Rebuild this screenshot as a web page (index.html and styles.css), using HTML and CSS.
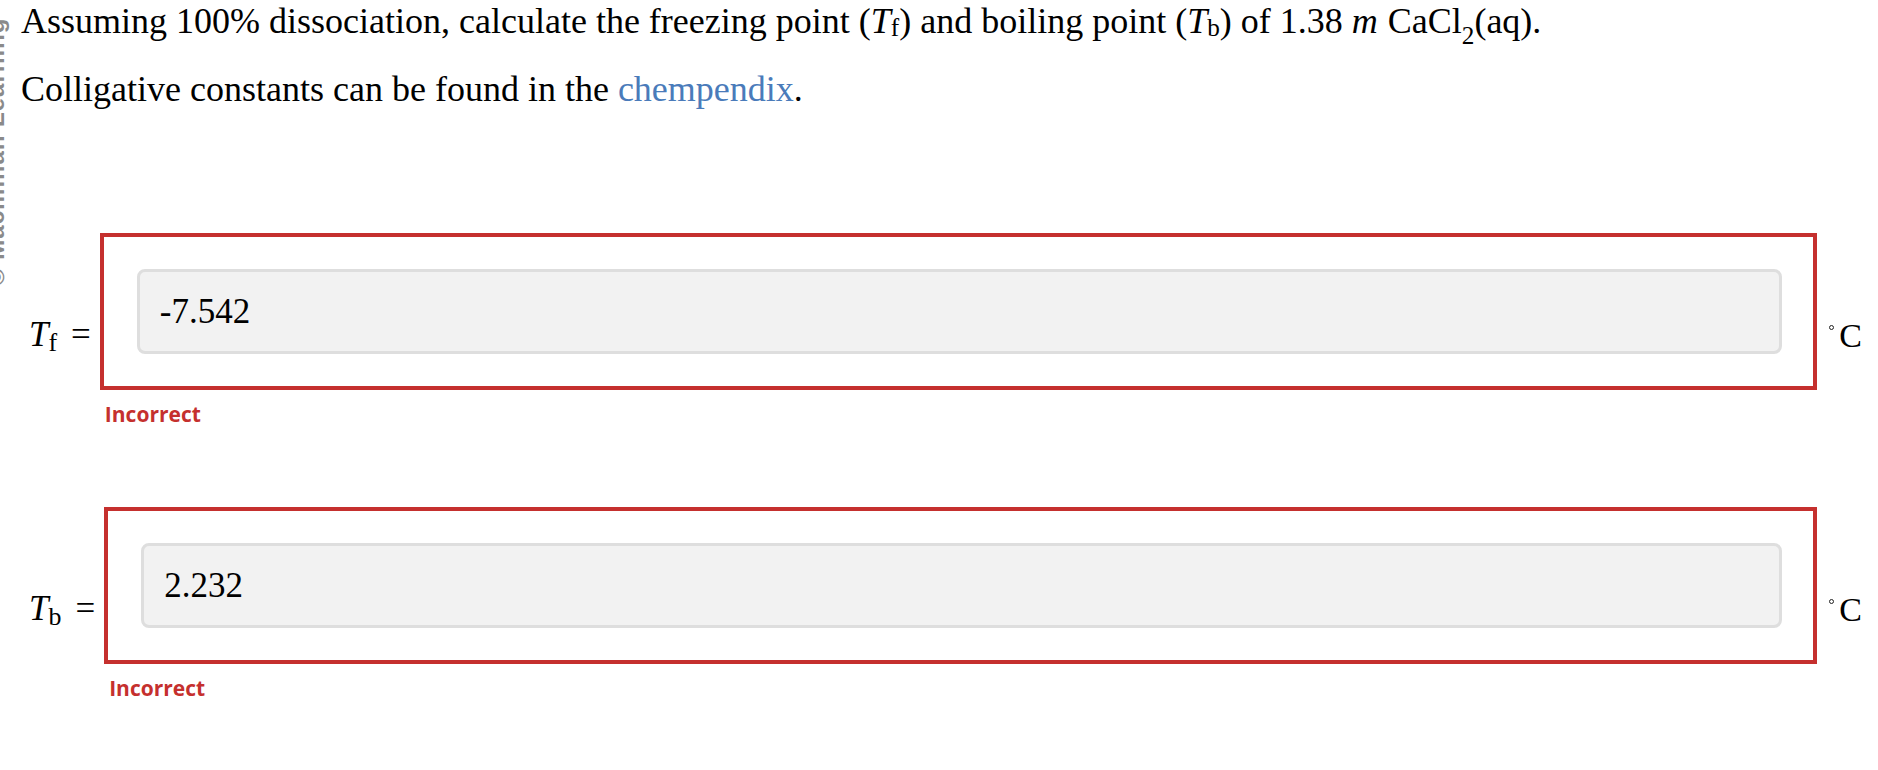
FILE: index.html
```html
<!DOCTYPE html>
<html lang="en">
<head>
<meta charset="UTF-8">
<title>Colligative properties</title>
<link rel="stylesheet" href="styles.css">
</head>
<body>

<div class="marca">© Macmillan Learning</div>

<div class="pergunta">
  <p class="enunciado">Assuming 100% dissociation, calculate the freezing point (<i>T</i><sub>f</sub>) and boiling point (<i>T</i><sub>b</sub>) of 1.38 <i class="mol">m</i> CaCl<sub class="quim">2</sub>(aq).</p>
  <p class="enunciado segundo">Colligative constants can be found in the <a href="#">chempendix</a>.</p>
</div>

<div class="resposta primeira">
  <div class="rotulo"><i>T</i><sub>f</sub><span class="igual">=</span></div>
  <div class="campo">
    <div class="caixa"><input type="text" value="-7.542"></div>
    <div class="aviso">Incorrect</div>
  </div>
  <div class="unidade"><span class="grau"></span>C</div>
</div>

<div class="resposta">
  <div class="rotulo"><i>T</i><sub>b</sub><span class="igual">=</span></div>
  <div class="campo">
    <div class="caixa"><input type="text" value="2.232"></div>
    <div class="aviso">Incorrect</div>
  </div>
  <div class="unidade"><span class="grau"></span>C</div>
</div>

</body>
</html>
```

FILE: styles.css
```css
body {
  margin: 0;
  font-family: "Liberation Serif", "Times New Roman", serif;
  color: #000;
  background: #fff;
}

/* faixa vertical cortada na borda esquerda */
.marca {
  position: absolute;
  left: 0;
  top: 0;
  transform-origin: top left;
  transform: translate(-16px, 286px) rotate(-90deg);
  font-family: "Liberation Sans", Arial, sans-serif;
  font-weight: bold;
  font-size: 24px;
  line-height: 24px;
  color: #8a8a8a;
  white-space: nowrap;
  letter-spacing: 1px;
}

.pergunta {
  padding: 1px 21px 0;
}
.enunciado {
  margin: 0;
  font-size: 36px;
  line-height: 40px;
}
.segundo {
  margin-top: 28px;
}
.enunciado a {
  color: #4a7bba;
  text-decoration: none;
}
.mol {
  font-style: italic;
  letter-spacing: 1px;
}

sub {
  font-size: 0.7em;
  line-height: 0;
  vertical-align: -0.12em;
}
sub.quim {
  vertical-align: -0.45em;
}

.resposta {
  display: flex;
  align-items: flex-start;
  padding: 0 16px 0 29px;
}
.primeira {
  margin-top: 124px;
}
.resposta + .resposta {
  margin-top: 79px;
}

.rotulo {
  margin-top: 82px;
  margin-right: 9px;
  font-size: 35px;
  line-height: 40px;
  white-space: nowrap;
}
.rotulo sub {
  font-size: 0.74em;
  vertical-align: -0.18em;
}
.igual {
  margin-left: 14px;
}

.campo {
  flex: 1;
}
.caixa {
  border: 4px solid #c5302e;
  padding: 32px 31px 32px 33px;
}
.caixa input {
  display: block;
  width: 100%;
  box-sizing: border-box;
  height: 85px;
  border: 3px solid #dedede;
  border-radius: 8px;
  background: #f2f2f2;
  padding: 0 20px;
  font-family: "Liberation Serif", "Times New Roman", serif;
  font-size: 35px;
  color: #000;
  outline: none;
}
.aviso {
  margin-top: 10px;
  padding-left: 5px;
  font-family: "Open Sans", Arial, sans-serif;
  font-weight: bold;
  font-size: 21px;
  line-height: 28px;
  color: #c5302e;
}

.unidade {
  margin-top: 83px;
  margin-left: 12px;
  font-size: 34px;
  line-height: 40px;
  white-space: nowrap;
}
.grau {
  display: inline-block;
  width: 3px;
  height: 3px;
  border: 1px solid #222;
  border-radius: 50%;
  vertical-align: top;
  margin-top: 9px;
  margin-right: 5px;
}
```
